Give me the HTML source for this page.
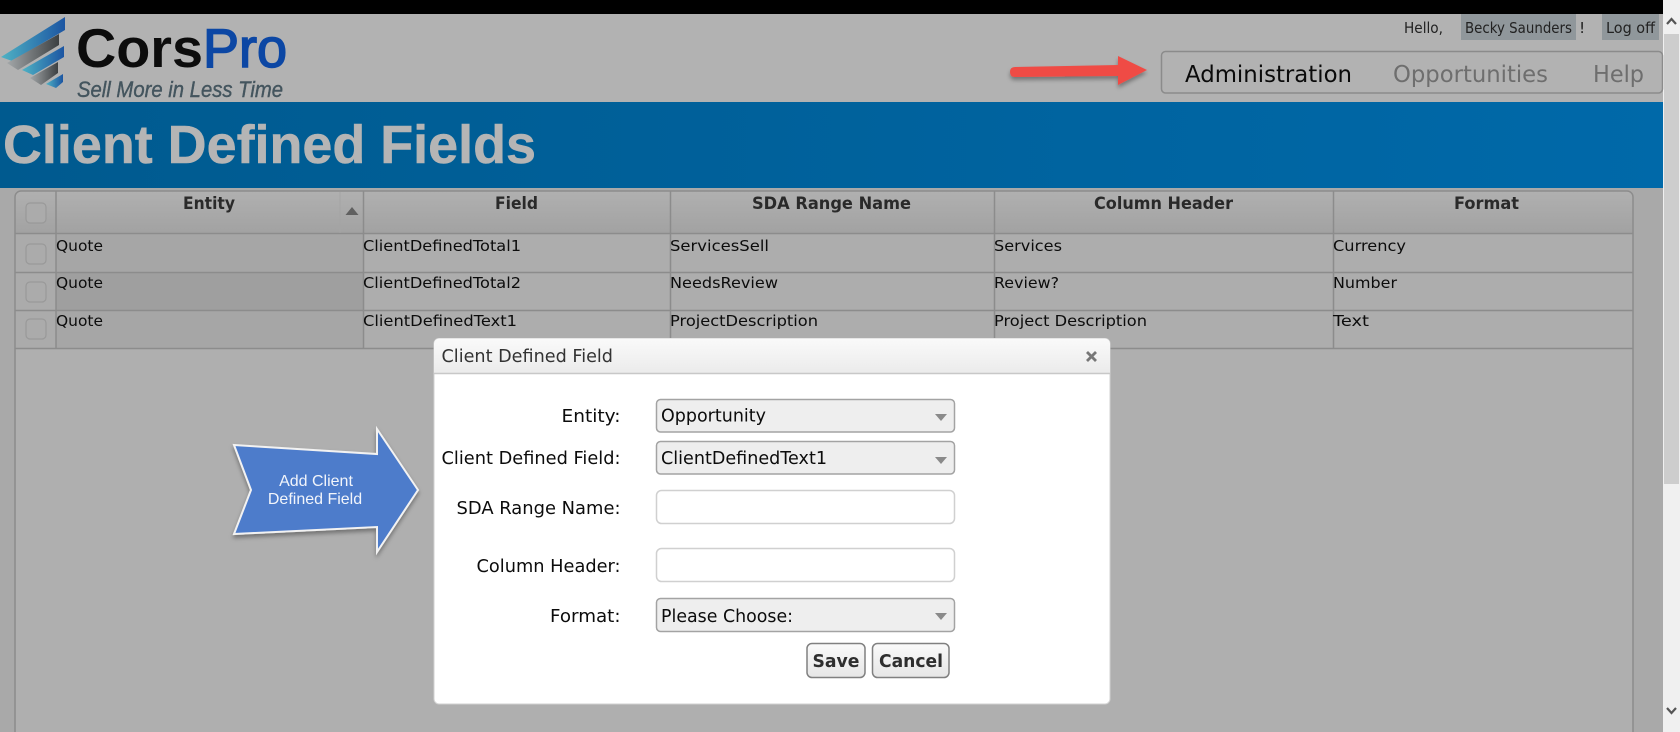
<!DOCTYPE html>
<html lang="en">
<head>
<meta charset="utf-8">
<title>Client Defined Fields</title>
<style>
html,body{margin:0;padding:0;width:1680px;height:732px;overflow:hidden;background:#a9a9a9}
svg{display:block}
.v{font-family:"DejaVu Sans",sans-serif}
.l{font-family:"Liberation Sans",sans-serif}
.h{font-family:"DejaVu Sans",sans-serif;font-weight:bold;font-size:16.5px;fill:#2a2a2a}
.c{font-family:"DejaVu Sans",sans-serif;font-size:15.5px;fill:#0c0c0c}
.f{font-family:"DejaVu Sans",sans-serif;font-size:17.5px;fill:#0c0c0c}
.g{stroke:#8c8c8c;stroke-width:1.5;fill:none}
.cb{fill:#ababab;stroke:#999;stroke-width:1.2}
.sel{fill:#eee;stroke:#a3a3a3;stroke-width:1.5}
.inp{fill:#fff;stroke:#d0d0d0;stroke-width:1.5}
.tri{fill:#8a8a8a}
.btn{fill:url(#btn);stroke:#808080;stroke-width:1.5}
</style>
</head>
<body>
<svg xmlns="http://www.w3.org/2000/svg" width="1680" height="732" viewBox="0 0 1680 732">
<defs>
<linearGradient id="blue" x1="0" x2="1" y1="0" y2="0"><stop offset="0" stop-color="#005a8f"/><stop offset="1" stop-color="#0069a9"/></linearGradient>
<linearGradient id="head" x1="0" x2="0" y1="0" y2="1"><stop offset="0" stop-color="#b0b0b0"/><stop offset="1" stop-color="#a2a2a2"/></linearGradient>
<linearGradient id="dlg" x1="0" x2="0" y1="0" y2="1"><stop offset="0" stop-color="#fafafa"/><stop offset="1" stop-color="#ebebeb"/></linearGradient>
<linearGradient id="btn" x1="0" x2="0" y1="0" y2="1"><stop offset="0" stop-color="#fafafa"/><stop offset="1" stop-color="#e6e6e6"/></linearGradient>
<linearGradient id="s1" x1="0" x2="1" y1="0" y2="0"><stop offset="0" stop-color="#4fb2c4"/><stop offset="1" stop-color="#1c55a2"/></linearGradient>
<linearGradient id="s2" x1="0" x2="1" y1="0" y2="0"><stop offset="0" stop-color="#a3a7a9"/><stop offset="1" stop-color="#3c4042"/></linearGradient>
<filter id="sh" x="-10%" y="-30%" width="120%" height="170%"><feDropShadow dx="0" dy="3" stdDeviation="2" flood-color="#000" flood-opacity=".35"/></filter>
</defs>

<!-- page base -->
<rect width="1680" height="732" fill="#a9a9a9"/>
<rect width="1663" height="102" y="14" fill="#b2b2b2"/>
<rect width="1680" height="14" fill="#000"/>
<rect x="0" y="102" width="1663" height="86" fill="url(#blue)"/>

<!-- scrollbar -->
<rect x="1663" y="0" width="17" height="732" fill="#f0f0f0"/>
<rect x="1664" y="34" width="15" height="450" fill="#cdcdcd"/>
<path d="M1667 24l4.500-5 4.500 5" fill="none" stroke="#555" stroke-width="2.200"/>
<path d="M1667 708l4.500 5 4.500-5" fill="none" stroke="#555" stroke-width="2.200"/>

<!-- logo -->
<polygon points="1,57 65,17 65,30 12,61" fill="url(#s1)"/>
<polygon points="7,63 59,34 59,45 18,70" fill="url(#s2)"/>
<polygon points="22,70 64,46 64,57 33,75" fill="url(#s1)"/>
<polygon points="30,78 58,62 58,73 41,85" fill="url(#s2)"/>
<polygon points="46,84 63,74 63,82 56,88" fill="url(#s1)"/>
<text class="l" x="76" y="67" font-size="55" font-weight="bold" fill="#0c0c0c" textLength="127" lengthAdjust="spacingAndGlyphs">Cors</text>
<text class="l" x="203" y="67" font-size="55" fill="#0c47a4" stroke="#0c47a4" stroke-width="1.600" textLength="84" lengthAdjust="spacingAndGlyphs">Pro</text>
<text class="l" x="77" y="97" font-size="22.500" font-style="italic" fill="#44555e" stroke="#44555e" stroke-width=".4" textLength="206" lengthAdjust="spacingAndGlyphs">Sell More in Less Time</text>

<!-- top bar -->
<text class="v" x="1404" y="33" font-size="15.500" fill="#222" textLength="39" lengthAdjust="spacingAndGlyphs">Hello,</text>
<rect x="1461" y="14" width="115" height="26" fill="#90979b"/>
<text class="v" x="1465" y="33" font-size="15.500" fill="#222" textLength="107" lengthAdjust="spacingAndGlyphs">Becky Saunders</text>
<text class="v" x="1579" y="33" font-size="15.500" fill="#222">!</text>
<rect x="1602" y="14" width="57" height="26" fill="#90979b"/>
<text class="v" x="1606" y="33" font-size="15.500" fill="#222" textLength="49" lengthAdjust="spacingAndGlyphs">Log off</text>

<!-- red arrow -->
<path d="M1015 67L1118 65V56L1147 70L1118 85V76L1015 77Q1010 77 1010 72Q1010 67 1015 67Z" fill="#ef4b45" filter="url(#sh)"/>

<!-- nav -->
<rect x="1161.500" y="51.500" width="501" height="41.500" rx="4" fill="#b2b2b2" stroke="#8b8b8b" stroke-width="1.500"/>
<text class="v" x="1185" y="82" font-size="23.500" fill="#0a0a0a" textLength="167" lengthAdjust="spacingAndGlyphs">Administration</text>
<text class="v" x="1393" y="82" font-size="23.500" fill="#6e6e6e" textLength="155" lengthAdjust="spacingAndGlyphs">Opportunities</text>
<text class="v" x="1593" y="82" font-size="23.500" fill="#6e6e6e" textLength="51" lengthAdjust="spacingAndGlyphs">Help</text>

<!-- title -->
<text class="l" x="3" y="163" font-size="54" font-weight="bold" fill="#b5b5b5" stroke="#b5b5b5" stroke-width=".5" textLength="533" lengthAdjust="spacingAndGlyphs">Client Defined Fields</text>

<!-- table -->
<path d="M15 732V197a6 6 0 0 1 6-6H1627a6 6 0 0 1 6 6V732Z" fill="#afafaf"/>
<path d="M15 233V197a6 6 0 0 1 6-6H1627a6 6 0 0 1 6 6V233Z" fill="url(#head)"/>
<rect x="15" y="233" width="41" height="115" fill="#ababab"/>
<rect x="56" y="233" width="307" height="39" fill="#a6a6a6"/>
<rect x="56" y="272" width="307" height="38" fill="#9f9f9f"/>
<rect x="56" y="310" width="307" height="38" fill="#a6a6a6"/>
<rect x="363" y="233" width="1270" height="115" fill="#adadad"/>
<path class="g" d="M15 732V197a6 6 0 0 1 6-6H1627a6 6 0 0 1 6 6V732"/>
<path class="g" d="M15 233.500H1633M15 272.500H1633M15 310.500H1633M15 348.500H1633M56 191V348M363.500 191V348M670.500 191V348M994.500 191V348M1333.500 191V348"/>
<path d="M340 192V233" stroke="#a4a4a4" stroke-width="1"/>
<rect class="cb" x="26" y="203" width="20" height="20" rx="4"/>
<rect class="cb" x="26" y="244" width="20" height="20" rx="4"/>
<rect class="cb" x="26" y="282" width="20" height="20" rx="4"/>
<rect class="cb" x="26" y="319" width="20" height="20" rx="4"/>
<polygon points="352,207 358.500,215 345.500,215" fill="#606060"/>

<text class="h" x="183" y="209" textLength="52" lengthAdjust="spacingAndGlyphs">Entity</text>
<text class="h" x="495" y="209" textLength="43" lengthAdjust="spacingAndGlyphs">Field</text>
<text class="h" x="752" y="209" textLength="159" lengthAdjust="spacingAndGlyphs">SDA Range Name</text>
<text class="h" x="1094" y="209" textLength="139" lengthAdjust="spacingAndGlyphs">Column Header</text>
<text class="h" x="1454" y="209" textLength="65" lengthAdjust="spacingAndGlyphs">Format</text>

<text class="c" x="56" y="251" textLength="47" lengthAdjust="spacingAndGlyphs">Quote</text>
<text class="c" x="363" y="251" textLength="158" lengthAdjust="spacingAndGlyphs">ClientDefinedTotal1</text>
<text class="c" x="670" y="251" textLength="99" lengthAdjust="spacingAndGlyphs">ServicesSell</text>
<text class="c" x="994" y="251" textLength="68" lengthAdjust="spacingAndGlyphs">Services</text>
<text class="c" x="1333" y="251" textLength="73" lengthAdjust="spacingAndGlyphs">Currency</text>

<text class="c" x="56" y="288" textLength="47" lengthAdjust="spacingAndGlyphs">Quote</text>
<text class="c" x="363" y="288" textLength="158" lengthAdjust="spacingAndGlyphs">ClientDefinedTotal2</text>
<text class="c" x="670" y="288" textLength="108" lengthAdjust="spacingAndGlyphs">NeedsReview</text>
<text class="c" x="994" y="288" textLength="65" lengthAdjust="spacingAndGlyphs">Review?</text>
<text class="c" x="1333" y="288" textLength="64" lengthAdjust="spacingAndGlyphs">Number</text>

<text class="c" x="56" y="326" textLength="47" lengthAdjust="spacingAndGlyphs">Quote</text>
<text class="c" x="363" y="326" textLength="154" lengthAdjust="spacingAndGlyphs">ClientDefinedText1</text>
<text class="c" x="670" y="326" textLength="148" lengthAdjust="spacingAndGlyphs">ProjectDescription</text>
<text class="c" x="994" y="326" textLength="153" lengthAdjust="spacingAndGlyphs">Project Description</text>
<text class="c" x="1333" y="326" textLength="36" lengthAdjust="spacingAndGlyphs">Text</text>

<!-- callout arrow -->
<polygon points="234,445 377,454 377,429 418,490 377,552 377,527 234,534 251,490" fill="#4d7bcb" stroke="#f2f2f2" stroke-width="2" filter="url(#sh)"/>
<text class="l" x="316" y="486" font-size="16" fill="#f2f5fb" text-anchor="middle">Add Client</text>
<text class="l" x="315" y="504" font-size="16" fill="#f2f5fb" text-anchor="middle">Defined Field</text>

<!-- dialog -->
<rect x="434" y="338.500" width="676" height="365.500" rx="5" fill="#fff" stroke="#d2d2d2" stroke-width="1"/>
<path d="M434 373V343.500a5 5 0 0 1 5-5H1105a5 5 0 0 1 5 5V373Z" fill="url(#dlg)"/>
<path d="M434 373.500H1110" stroke="#c8c8c8" stroke-width="1.500"/>
<text class="v" x="441.500" y="362" font-size="17.500" fill="#333" textLength="171.500" lengthAdjust="spacingAndGlyphs">Client Defined Field</text>
<path d="M1087 352L1096 361M1096 352L1087 361" stroke="#777" stroke-width="2.800"/>

<text class="f" x="561.500" y="422" textLength="59" lengthAdjust="spacingAndGlyphs">Entity:</text>
<text class="f" x="441.500" y="464" textLength="179" lengthAdjust="spacingAndGlyphs">Client Defined Field:</text>
<text class="f" x="456.500" y="514" textLength="164" lengthAdjust="spacingAndGlyphs">SDA Range Name:</text>
<text class="f" x="476.500" y="572" textLength="144" lengthAdjust="spacingAndGlyphs">Column Header:</text>
<text class="f" x="550" y="622" textLength="70.500" lengthAdjust="spacingAndGlyphs">Format:</text>

<rect class="sel" x="656.500" y="399.500" width="298" height="32.500" rx="4"/>
<text class="f" x="661" y="421.500" textLength="105" lengthAdjust="spacingAndGlyphs">Opportunity</text>
<polygon class="tri" points="935,414 947,414 941,421"/>
<rect class="sel" x="656.500" y="441.500" width="298" height="32.500" rx="4"/>
<text class="f" x="661" y="464" textLength="166" lengthAdjust="spacingAndGlyphs">ClientDefinedText1</text>
<polygon class="tri" points="935,457 947,457 941,464"/>
<rect class="inp" x="656.500" y="490.500" width="298" height="33" rx="5"/>
<rect class="inp" x="656.500" y="548.500" width="298" height="33" rx="5"/>
<rect class="sel" x="656.500" y="598.500" width="298" height="33" rx="4"/>
<text class="f" x="661" y="622" textLength="132" lengthAdjust="spacingAndGlyphs">Please Choose:</text>
<polygon class="tri" points="935,613 947,613 941,620"/>

<rect class="btn" x="807" y="643.500" width="58" height="34" rx="5"/>
<text class="v" x="812.500" y="667" font-size="18" font-weight="bold" fill="#2e2e2e" textLength="47" lengthAdjust="spacingAndGlyphs">Save</text>
<rect class="btn" x="872.500" y="643.500" width="76.500" height="34" rx="5"/>
<text class="v" x="879" y="667" font-size="18" font-weight="bold" fill="#2e2e2e" textLength="64" lengthAdjust="spacingAndGlyphs">Cancel</text>
</svg>
</body>
</html>
